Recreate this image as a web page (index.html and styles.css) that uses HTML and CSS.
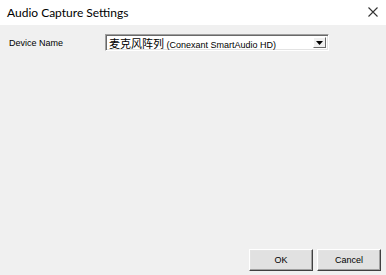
FILE: index.html
```html
<!DOCTYPE html>
<html lang="en">
<head>
    <meta charset="UTF-8">
    <meta name="viewport" content="width=device-width, initial-scale=1.0">
    <title>Audio Capture Settings</title>
    <link rel="stylesheet" href="styles.css">
</head>
<body>
    <div class="dialog">
        <div class="title-bar">
            <span class="title">Audio Capture Settings</span>
            <span class="close-btn">
                <svg width="10" height="10" viewBox="0 0 10 10">
                    <path d="M0.5 0.5 L9.5 9.5 M9.5 0.5 L0.5 9.5" stroke="#333" stroke-width="1.1" fill="none"/>
                </svg>
            </span>
        </div>
        <div class="dialog-body">
            <div class="field-row">
                <label class="field-label">Device Name</label>
                <div class="combo">
                    <span class="combo-text"><span class="cjk">麦克风阵列</span> (Conexant SmartAudio HD)</span>
                    <span class="combo-btn">
                        <svg width="7" height="4" viewBox="0 0 7 4">
                            <path d="M0 0 H7 L3.5 4 Z" fill="#000"/>
                        </svg>
                    </span>
                </div>
            </div>
        </div>
        <div class="dialog-footer">
            <button class="btn">OK</button>
            <button class="btn">Cancel</button>
        </div>
    </div>
</body>
</html>
```

FILE: styles.css
```css
body {
    margin: 0;
    padding: 0;
    font-family: 'Liberation Sans', Arial, sans-serif;
    background-color: #f0f0f0;
}
.dialog {
    width: 386px;
    height: 275px;
    display: flex;
    flex-direction: column;
    background-color: #f0f0f0;
}
.title-bar {
    height: 25px;
    background-color: #fff;
    display: flex;
    align-items: center;
    justify-content: space-between;
    padding: 0 8px 0 7px;
    flex-shrink: 0;
}
.title {
    font-family: 'Lato', 'Noto Sans', sans-serif;
    font-size: 12px;
    color: #000;
    margin-top: -1px;
}
.close-btn {
    display: flex;
    margin-top: -1px;
}
.dialog-body {
    flex: 1;
    padding: 9px 0 0 9px;
}
.field-row {
    display: flex;
    align-items: center;
}
.field-label {
    width: 96px;
    font-size: 9px;
    color: #000;
    margin-top: 1px;
}
.combo {
    width: 224px;
    height: 17px;
    box-sizing: border-box;
    background-color: #fff;
    border: 1px solid;
    border-color: #a0a0a0 #fff #fff #a0a0a0;
    box-shadow: inset 1px 1px 0 #696969, inset -1px -1px 0 #e3e3e3;
    display: flex;
    align-items: center;
    justify-content: space-between;
    padding: 0 2px 0 3px;
}
.combo-text {
    font-size: 9px;
    color: #000;
    white-space: nowrap;
}
.cjk {
    font-family: 'Noto Sans CJK SC', sans-serif;
    font-size: 11px;
}
.combo-btn {
    width: 13px;
    height: 11px;
    box-sizing: border-box;
    background-color: #f0f0f0;
    border: 1px solid;
    border-color: #fff #696969 #696969 #fff;
    display: flex;
    align-items: center;
    justify-content: center;
}
.dialog-footer {
    display: flex;
    justify-content: flex-end;
    gap: 4px;
    padding: 0 5px 4px 0;
}
.btn {
    width: 64px;
    height: 22px;
    font-family: 'Liberation Sans', Arial, sans-serif;
    font-size: 9px;
    color: #000;
    background-color: #e1e1e1;
    border: 1px solid;
    border-color: #fff #404040 #404040 #fff;
    box-shadow: inset -1px -1px 0 #a0a0a0, inset 1px 1px 0 #e3e3e3;
    padding: 0;
}
```
